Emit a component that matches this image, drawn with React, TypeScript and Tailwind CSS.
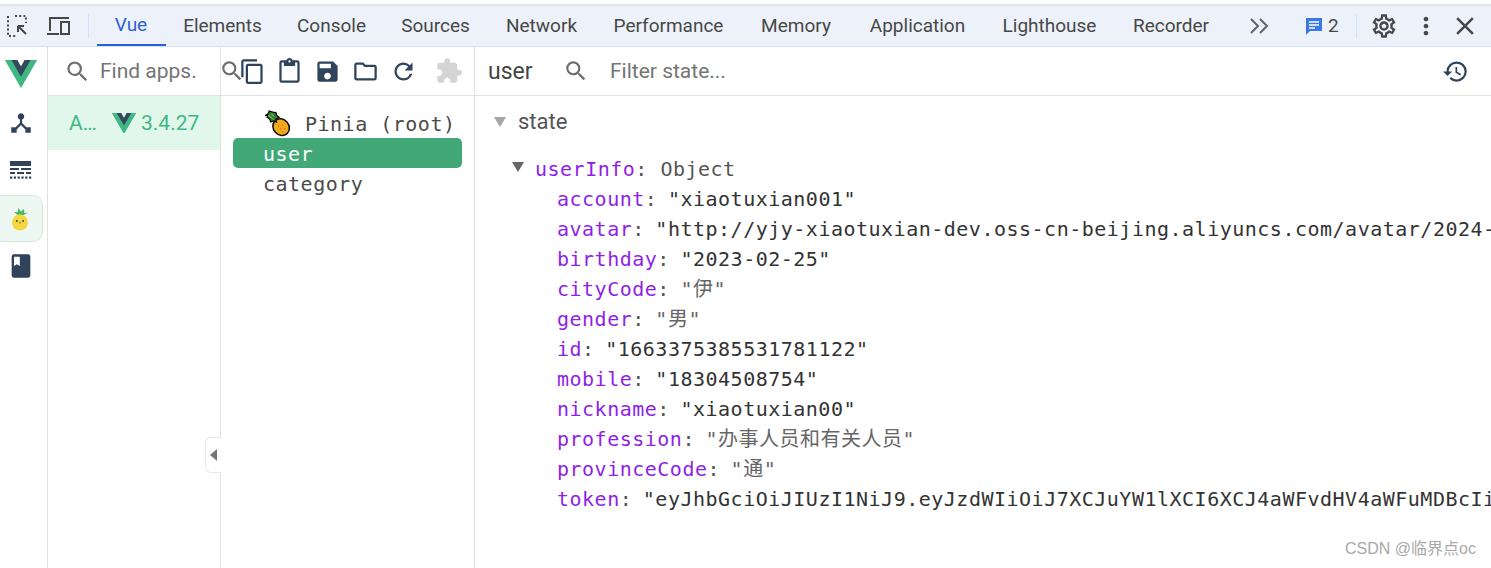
import {
  MdBook,
  MdClose,
  MdContentCopy,
  MdDeviceHub,
  MdExtension,
  MdHistory,
  MdMoreVert,
  MdOutlineContentPaste,
  MdOutlineFolder,
  MdOutlineSettings,
  MdRefresh,
  MdSave,
  MdSearch,
} from "react-icons/md";

const tabs = [
  { label: "Elements", width: "w-[113px]" },
  { label: "Console", width: "w-[105px]" },
  { label: "Sources", width: "w-[103px]" },
  { label: "Network", width: "w-[109px]" },
  { label: "Performance", width: "w-[145px]" },
  { label: "Memory", width: "w-[110px]" },
  { label: "Application", width: "w-[133px]" },
  { label: "Lighthouse", width: "w-[131px]" },
  { label: "Recorder", width: "w-[112px]" },
];

const fields = [
  { key: "account", value: '"xiaotuxian001"' },
  { key: "avatar", value: '"http://yjy-xiaotuxian-dev.oss-cn-beijing.aliyuncs.com/avatar/2024-' },
  { key: "birthday", value: '"2023-02-25"' },
  { key: "cityCode", value: '"伊"', cjk: true },
  { key: "gender", value: '"男"', cjk: true },
  { key: "id", value: '"1663375385531781122"' },
  { key: "mobile", value: '"18304508754"' },
  { key: "nickname", value: '"xiaotuxian00"' },
  { key: "profession", value: '"办事人员和有关人员"', cjk: true },
  { key: "provinceCode", value: '"通"', cjk: true },
  { key: "token", value: '"eyJhbGciOiJIUzI1NiJ9.eyJzdWIiOiJ7XCJuYW1lXCI6XCJ4aWFvdHV4aWFuMDBcIi' },
];

function VueLogo({ size }: { size: number }) {
  return (
    <svg width={size} height={size * 0.87} viewBox="0 0 256 221">
      <path fill="#41b883" d="M204.8 0H256L128 220.8 0 0h97.92L128 51.2 157.44 0z" />
      <path fill="#41b883" d="M0 0l128 220.8L256 0h-51.2L128 132.48 50.56 0z" />
      <path fill="#35495e" d="M50.56 0L128 133.12 204.8 0h-47.36L128 51.2 97.92 0z" />
    </svg>
  );
}

function TimelineIcon() {
  return (
    <svg width="22" height="20" viewBox="0 0 22 20" fill="#2f435a">
      <rect x="0" y="0" width="21" height="5" />
      <rect x="0" y="7" width="9" height="2" />
      <rect x="11" y="7" width="10" height="2" />
      <rect x="0" y="11" width="5" height="2" />
      <rect x="7" y="11" width="7" height="2" />
      <rect x="16" y="11" width="5" height="2" />
      <rect x="0" y="15.5" width="2.2" height="2.2" />
      <rect x="3.8" y="15.5" width="2.2" height="2.2" />
      <rect x="7.6" y="15.5" width="2.2" height="2.2" />
      <rect x="11.4" y="15.5" width="2.2" height="2.2" />
      <rect x="15.2" y="15.5" width="2.2" height="2.2" />
      <rect x="19" y="15.5" width="2.2" height="2.2" />
    </svg>
  );
}

function PiniaMascot() {
  return (
    <svg width="18" height="24" viewBox="0 0 18 24">
      <path fill="#4ab866" d="M9 10 3 5l3.5.2L7.5 1 10 4.5 13 2l.3 4 3.7-.5z" />
      <ellipse cx="9" cy="15.5" rx="8" ry="8" fill="#f5d742" />
      <circle cx="5.8" cy="14" r="1" fill="#3b4a5a" />
      <circle cx="12.2" cy="14" r="1" fill="#3b4a5a" />
      <path d="M8 15.5q1 1 2 0" stroke="#3b4a5a" strokeWidth=".7" fill="none" />
    </svg>
  );
}

function PineappleEmoji() {
  return (
    <svg width="27" height="27" viewBox="0 0 26 26">
      <ellipse cx="16.500" cy="16.500" rx="7.500" ry="8.500" transform="rotate(-42 16.500 16.500)" fill="#f5a91f" stroke="#111" strokeWidth="1.500" />
      <path fill="#2e7d32" stroke="#111" strokeWidth="1.300" d="M1 5.500 4 3.500 5 1l3.500 1 3 .5.500 2.500 2.500 2-3 2 .5 2.500-3-1-2.500 1-1-3-2.500-1.500.5-2z" />
      <path stroke="#8bc34a" strokeWidth="1" d="M4 5l5 4M7 3.500l3 3" />
      <g fill="#c97f10">
        <circle cx="14" cy="15" r=".8" />
        <circle cx="18" cy="14.500" r=".8" />
        <circle cx="16" cy="18" r=".8" />
        <circle cx="20" cy="18" r=".8" />
        <circle cx="18" cy="21" r=".8" />
      </g>
    </svg>
  );
}

function Triangle({ className }: { className: string }) {
  return <span className={`block h-0 w-0 border-x-[6.5px] border-t-[10px] border-x-transparent ${className}`} />;
}

export default function App() {
  return (
    <div className="flex h-[568px] w-full flex-col overflow-hidden bg-white font-['Roboto',sans-serif]">
      {/* Devtools tab bar */}
      <div className="h-1 shrink-0 bg-white" />
      <div className="h-0.5 shrink-0 bg-[#e3e3e3]" />
      <div className="flex h-[41px] shrink-0 items-center border-b border-[#d3e3fd] bg-[#edf2fa] text-[19px] text-[#474747]">
        <div className="flex w-[97px] shrink-0 items-center pl-[6px]">
          <svg width="24" height="24" viewBox="0 0 24 24" fill="none" stroke="#474747" strokeWidth="2">
            <path strokeDasharray="2 2.2" d="M9 2h11v7M2 2v20h8" />
            <path d="M12 12l8 8M12 12h6M12 12v6" />
          </svg>
          <svg className="ml-[16px]" width="26" height="24" viewBox="0 0 26 24" fill="none" stroke="#474747" strokeWidth="2">
            <path d="M4 17V4h19M1 20h12" />
            <rect x="15" y="8" width="8" height="12" />
          </svg>
          <div className="ml-[16px] h-[24px] w-px bg-[#d3e3fd]" />
        </div>
        <div className="flex h-full items-center">
          <div className="flex h-full w-[69px] items-center justify-center border-b-2 border-[#2b5fd9] pr-[1px] pt-[1px] text-[#2b5fd9]">Vue</div>
          {tabs.map((tab) => (
            <div key={tab.label} className={`${tab.width} text-center`}>
              {tab.label}
            </div>
          ))}
        </div>
        <svg className="ml-[22px]" width="20" height="16" viewBox="0 0 20 16" fill="none" stroke="#5f6368" strokeWidth="2">
          <path d="M2 1l7 7-7 7M11 1l7 7-7 7" />
        </svg>
        <svg className="ml-[36px]" width="18" height="18" viewBox="0 0 18 18">
          <path fill="#3b78e7" d="M1 1h16v13H5l-4 4z" />
          <path stroke="#fff" strokeWidth="1.300" d="M4 5h10M4 8h10M4 11h6" />
        </svg>
        <div className="ml-[5px]">2</div>
        <div className="ml-[17px] h-[24px] w-px bg-[#d3e3fd]" />
        <MdOutlineSettings className="ml-[13px]" size={28} />
        <MdMoreVert className="ml-[14px]" size={28} />
        <MdClose className="ml-[10px]" size={30} />
      </div>

      <div className="relative flex min-h-0 flex-1">
        {/* Icon rail */}
        <div className="flex w-[48px] shrink-0 flex-col items-center border-r border-[#e2e2e2] text-[#2f435a]">
          <div className="flex h-[52px] items-center justify-center pr-[6px] pt-[2px]">
            <VueLogo size={32} />
          </div>
          <div className="flex h-[48px] items-center justify-center pr-[6px]">
            <MdDeviceHub size={26} />
          </div>
          <div className="flex h-[48px] items-center justify-center pr-[6px]">
            <TimelineIcon />
          </div>
          <div className="-ml-[12px] flex h-[47px] w-[50px] items-center justify-center rounded-[10px] border border-[#cfe9dc] bg-[#eef8f3] pl-[5px]">
            <PiniaMascot />
          </div>
          <div className="flex h-[48px] items-center justify-center pr-[6px]">
            <MdBook size={28} />
          </div>
        </div>

        {/* App list */}
        <div className="flex w-[173px] shrink-0 flex-col border-r border-[#e2e2e2]">
          <div className="flex h-[49px] items-center border-b border-[#e2e2e2] pl-[16px] text-[#6e6e6e]">
            <MdSearch size={27} />
            <span className="ml-[9px] whitespace-nowrap pt-[2px] text-[21px] text-[#757575]">Find apps.</span>
          </div>
          <div className="flex h-[54px] items-center bg-[#e1f7ec] pl-[21px] text-[21px] text-[#41b883]">
            <span className="w-[43px] pt-[2px]">A…</span>
            <VueLogo size={24} />
            <span className="ml-[5px] pt-[2px]">3.4.27</span>
          </div>
        </div>

        {/* Store list */}
        <div className="flex w-[254px] shrink-0 flex-col border-r border-[#e2e2e2]">
          <div className="flex h-[49px] items-center border-b border-[#e2e2e2] text-[#2f435a]">
            <MdSearch className="-ml-[2px] text-[#6e6e6e]" size={26} />
            <MdContentCopy className="-ml-[6px] mr-[10px]" size={27} />
            <MdOutlineContentPaste className="mr-[11px]" size={27} />
            <MdSave className="mr-[11px]" size={27} />
            <MdOutlineFolder className="mr-[11px]" size={27} />
            <MdRefresh className="mr-[18px]" size={27} />
            <MdExtension className="text-[#d4d4d4]" size={28} />
          </div>
          <div className="px-[12px] pt-[12px] font-['DejaVu_Sans_Mono',monospace] text-[20px] leading-[32px] tracking-[0.5px] text-[#4a4a4a]">
            <div className="flex h-[30px] items-center pl-[31px]">
              <PineappleEmoji />
              <span className="ml-[14px] pt-[2px]">Pinia (root)</span>
            </div>
            <div className="h-[30px] rounded-[5px] bg-[#42a878] pl-[30px] text-white">user</div>
            <div className="h-[30px] pl-[30px]">category</div>
          </div>
        </div>

        {/* State inspector */}
        <div className="flex min-w-0 flex-1 flex-col">
          <div className="flex h-[49px] shrink-0 items-center border-b border-[#e2e2e2] pl-[13px] pr-[22px]">
            <span className="w-[75px] pt-[2px] text-[23px] text-[#444]">user</span>
            <MdSearch className="text-[#6e6e6e]" size={26} />
            <span className="ml-[21px] pt-[2px] text-[21px] text-[#757575]">Filter state...</span>
            <MdHistory className="ml-auto text-[#2f435a]" size={27} />
          </div>
          <div className="flex h-[52px] items-center pl-[19px] text-[22px] text-[#555]">
            <Triangle className="border-t-[#a6a6a6]" />
            <span className="ml-[12px] pb-[2px]">state</span>
          </div>
          <div className="overflow-hidden whitespace-nowrap pt-[6px] font-['DejaVu_Sans_Mono','Noto_Sans_CJK_SC',monospace] text-[20px] leading-[30px] tracking-[0.5px] text-[#333]">
            <div className="flex h-[30px] items-center pl-[37px]">
              <Triangle className="mb-[4px] mr-[11px] border-t-[#666]" />
              <span className="text-[#8f1fe8]">userInfo</span>
              <span className="text-[#555]">:&nbsp;Object</span>
            </div>
            {fields.map((field) => (
              <div key={field.key} className="h-[30px] pl-[82px]">
                <span className="text-[#8f1fe8]">{field.key}</span>
                <span className="text-[#555]">:&nbsp;</span>
                <span className={field.cjk ? "-ml-[2px] text-[#666]" : "-ml-[2px]"}>{field.value}</span>
              </div>
            ))}
          </div>
        </div>

        {/* Split pane handle */}
        <div className="absolute left-[205px] top-[390px] flex h-[36px] w-[16px] items-center justify-center rounded-l-[6px] border border-r-0 border-[#e8e8e8] bg-white">
          <span className="block h-0 w-0 border-y-[6px] border-r-[7px] border-y-transparent border-r-[#777]" />
        </div>

        {/* Watermark */}
        <div className="absolute bottom-[7px] right-[15px] font-['Liberation_Sans','Noto_Sans_CJK_SC',sans-serif] text-[16px] text-[#a8a8a8]">
          CSDN @临界点oc
        </div>
      </div>
    </div>
  );
}
